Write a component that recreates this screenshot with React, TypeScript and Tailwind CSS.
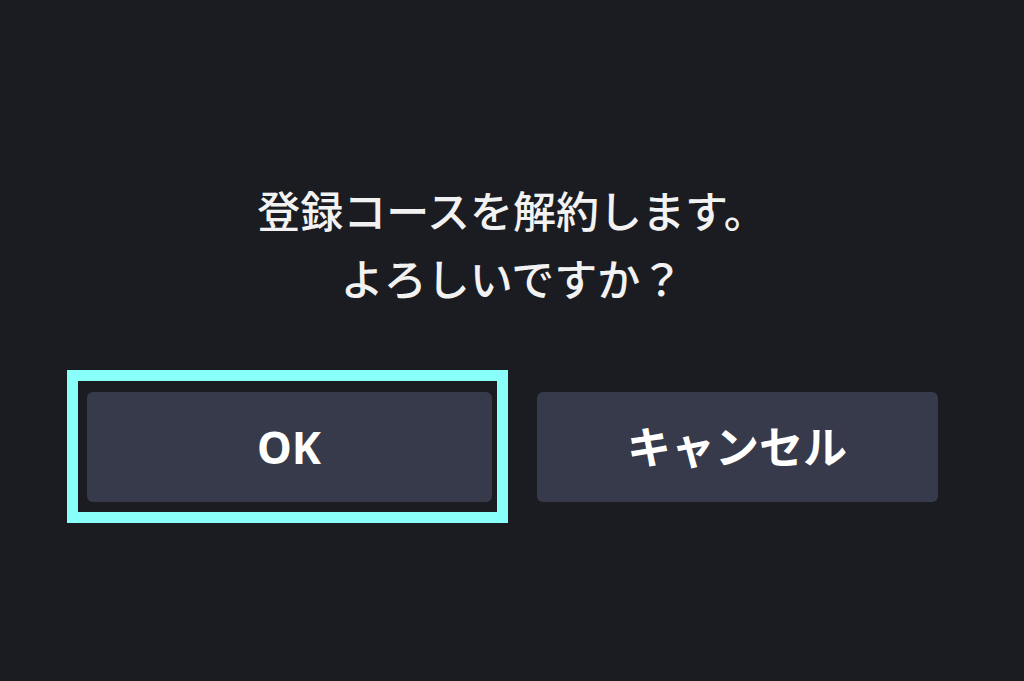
export default function App() {
  return (
    <div
      className="flex h-[681px] w-full flex-col items-center bg-[#1b1c21] text-white"
      style={{ fontFamily: '"Noto Sans", "Noto Sans CJK JP", sans-serif' }}
    >
      {/* Message */}
      <div className="mt-[178px] text-center text-[43px] font-medium leading-[68px] text-[#f2f2f2]">
        <p>登録コースを解約します。</p>
        <p>よろしいですか？</p>
      </div>

      {/* Actions */}
      <div className="mt-[78px] flex gap-[45px]">
        <div className="relative">
          <span className="pointer-events-none absolute -top-[22px] -left-[20px] -right-[16px] -bottom-[21px] border-[11px] border-[#88fff8]" />
          <button className="flex h-[110px] w-[405px] items-center justify-center rounded-md bg-[#363a4a] text-[44px] font-bold text-white">
            OK
          </button>
        </div>
        <button className="flex h-[110px] w-[401px] items-center justify-center rounded-md bg-[#363a4a] text-[44px] font-bold text-white">
          キャンセル
        </button>
      </div>
    </div>
  );
}
